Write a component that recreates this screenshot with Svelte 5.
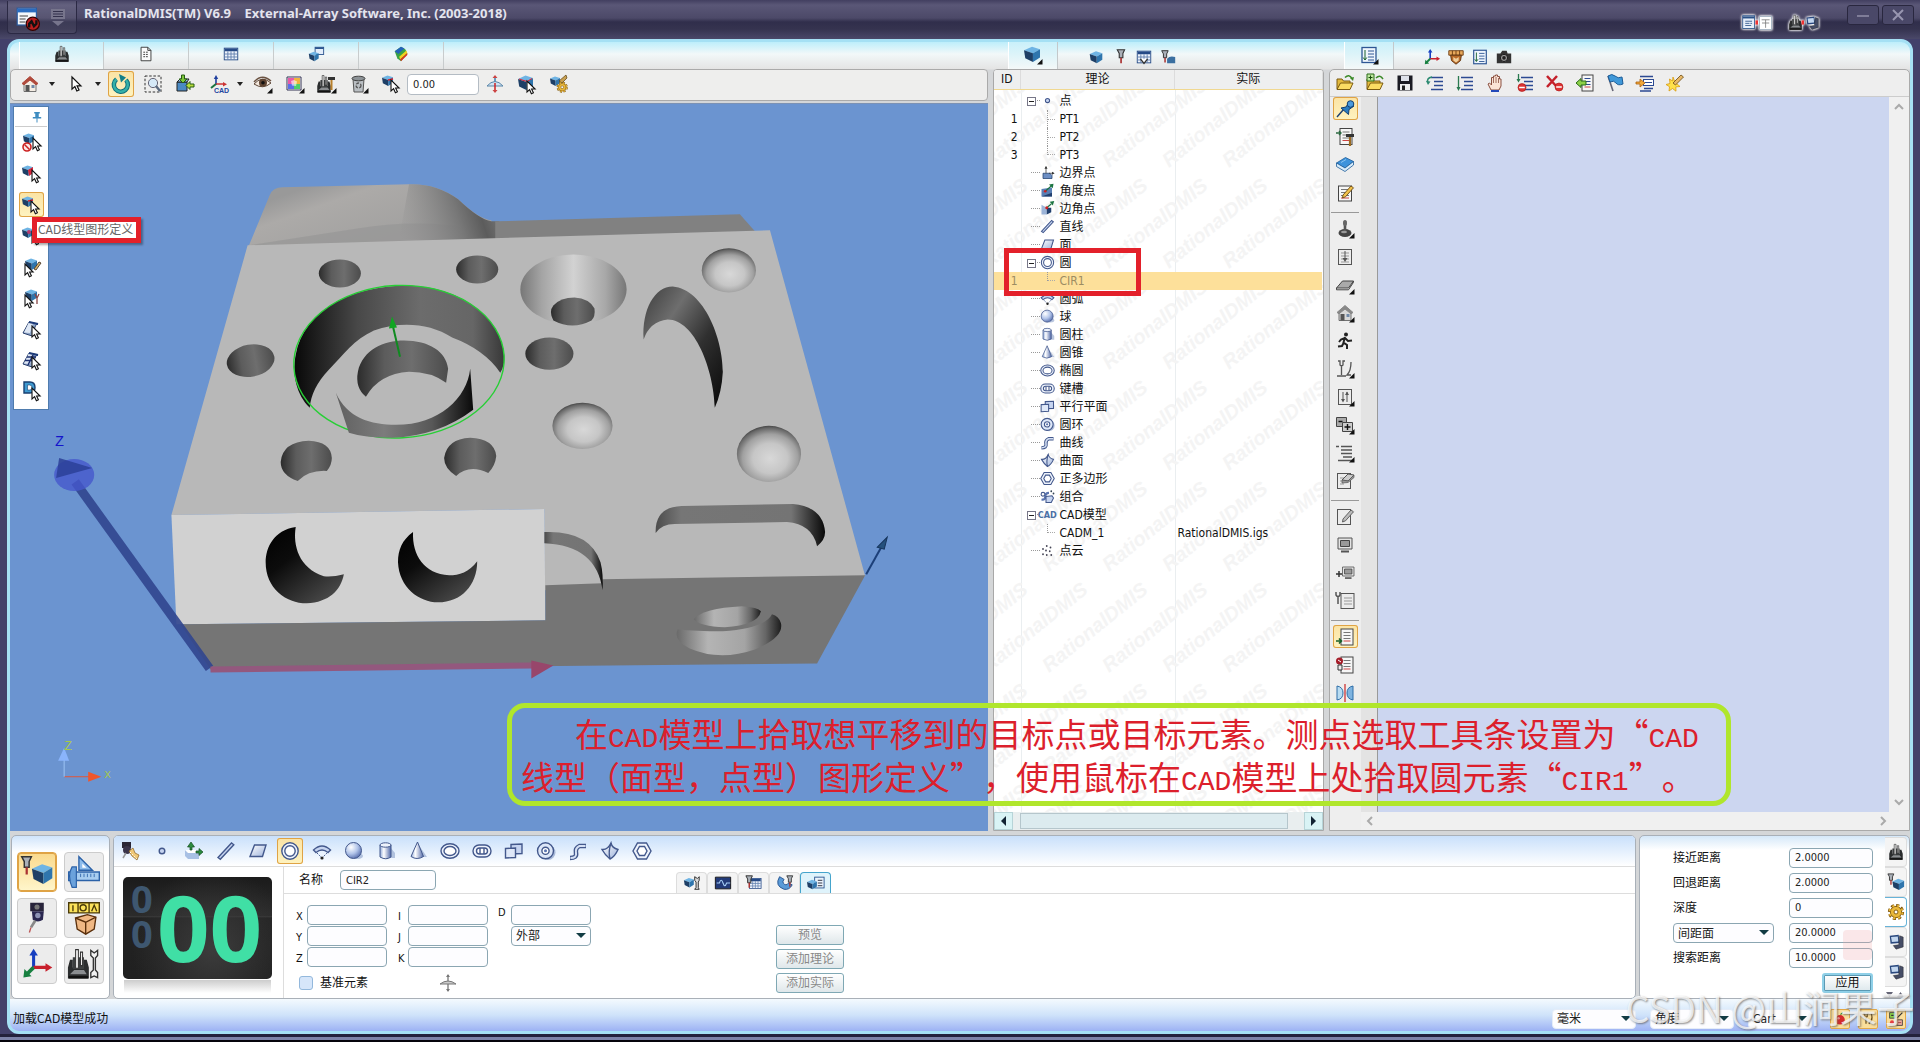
<script>
  const cube = (x, y, s) =>
    `<g transform="translate(${x} ${y}) scale(${s / 10})"><path d="M0 2.6 5 .4l5 1.6-4.4 2.6z" fill="#6fb4e4"/><path d="M0 2.6 5.6 4.6V10L.8 7.6z" fill="#1e3f66"/><path d="M5.6 4.6 10 2v5.2L5.6 10z" fill="#2f75ad"/></g>`;
  const cursor = (x, y, s = 1) =>
    `<path transform="translate(${x} ${y}) scale(${s})" d="M0 0v11l2.6-2.3 1.8 4 2-.9-1.8-3.8h3.5z" fill="#fff" stroke="#111" stroke-width="1.1"/>`;
  const corner = '<path d="M19.5 14v5.5H14z" fill="#111"/>';
  const probe = (x, y, s = 1) =>
    `<g transform="translate(${x} ${y}) scale(${s})"><path d="M0 0h6L4.6 3v3.5h-3V3z" fill="#aab0b8" stroke="#333" stroke-width=".9"/><path d="M3.1 6.5V11" stroke="#a33" stroke-width="1.4"/></g>`;
  const machine =
    '<path d="M2.500 12 4 7.500h2V12h8V7.500h2l1.500 4.500v6.500h-15z" fill="#2b2d2e"/><path d="M6 6h8v7H6z" fill="#3c3f40"/><path d="M8 1.500h2v11H8zM11.500 3h1.500v8h-1.500z" fill="#eee" stroke="#333" stroke-width=".7"/><path d="m4 16 3-2.500h7l2 2.500z" fill="#8a8d90"/><path d="M3 17h14v1.500H3z" fill="#111"/>';
  const page = (x = 4, y = 2, w = 12, h = 15, c = '#777') =>
    `<rect x="${x}" y="${y}" width="${w}" height="${h}" fill="#f6f6f6" stroke="#444"/><path d="M${x + 2.5} ${y + 3.5}h${w - 5}m-${w - 5} 3h${w - 5}m-${w - 5} 3h${w - 5}" stroke="${c}" fill="none"/><path d="M${x + 2.5} ${y + 12}h${w - 5}" stroke="#c44"/>`;
  const greyPage = (x = 3.5, y = 2.5) =>
    `<rect x="${x}" y="${y}" width="13" height="15" fill="#ececec" stroke="#555"/>`;
  const folder =
    '<path d="M2 16V6h5l1.5 2H15v2" fill="#e3b93c" stroke="#7a5a10"/><path d="M2 16.500 5.500 10H18l-3 6.500z" fill="#fbdc63" stroke="#7a5a10"/>';
  const lines = '<path d="M6 4.500h12M9 8.500h9M9 12.500h9M6 16.500h12" stroke="#2c4a92" stroke-width="1.700"/>';
  const noEntry = (x, y, r) =>
    `<circle cx="${x}" cy="${y}" r="${r}" fill="#d33" stroke="#a11" stroke-width=".6"/><path d="M${x - r + 1.2} ${y}h${2 * r - 2.4}" stroke="#fff" stroke-width="1.6"/>`;
  const house = (roof, wall) =>
    `<path d="M4 9v8.500h12V9l-6-5z" fill="${wall}" stroke="#555" stroke-width=".8"/><path d="M2 9.500 10 2.500l8 7-2 1.300-6-4.800-6 4.800z" fill="${roof}" stroke="${roof}"/><path d="M5.500 11h4v6.500h-4z" fill="#555"/><path d="M11.500 11h3v3h-3z" fill="#7089a8"/>`;
  const table =
    '<rect x="2.500" y="3.500" width="15" height="13" fill="#eef3fb" stroke="#264a86"/><path d="M3 5.500h14" stroke="#264a86" stroke-width="3"/><path d="M3 10h14M3 13.300h14M6.500 7v9M10 7v9M13.500 7v9" stroke="#5f7ead"/>';
  const list =
    '<rect x="3" y="2.500" width="14" height="15" fill="#eef5fd" stroke="#2d5694" stroke-width="1.300"/><path d="M9 6h6M9 9h6M9 12h6M9 15h6" stroke="#2d5694"/><path d="M6 5v9.500M4.200 12.500 6 15l1.800-2.500" stroke="#17602a" fill="none"/>';
  const monitor = (x, y, s = 1) =>
    `<g transform="translate(${x} ${y}) scale(${s})"><path d="M0 0h14v11H0z" fill="#e4e4e4" stroke="#555"/><path d="M2.500 2.500h9v6h-9z" fill="#999" stroke="#444"/><path d="M3 13.500h8" stroke="#555" stroke-width="2"/></g>`;
  const pc =
    '<path d="M3 3 13 2l1 9-10 1z" fill="#29487e"/><path d="M4.500 4.500 12 3.800l.6 5.600-7.200.7z" fill="#c3d7ef"/><path d="M14 3l4 1.500v11L10 18l-3-4 6-1z" fill="#454d66" stroke="#222" stroke-width=".5"/>';
  const surf =
    '<path d="M2 14 8 3l9 2c-5 1-2 8-6 12z" fill="#8fa6c8" stroke="#2a3f6c"/><path d="m8 3 4 1-3 10-6-.5z" fill="#dfe8f5"/><path d="m8 3 9 2" stroke="#1f3c7a" stroke-width="2.200"/>';
  const gear = (c = '#e9b83a') =>
    `<g transform="translate(10 10)"><circle r="7.500" fill="none" stroke="#7b5208" stroke-width="3" stroke-dasharray="3.400 2.490"/><circle r="6.300" fill="${c}" stroke="#7b5208"/><circle r="7.200" fill="none" stroke="${c}" stroke-width="2" stroke-dasharray="2.400 3.255" stroke-dashoffset="-.5"/><circle r="2.200" fill="#fff" stroke="#7b5208"/></g>`;
  const axes =
    '<path d="M8 12V3" stroke="#173fc0" stroke-width="1.800"/><path d="M5.500 5 8 1l2.500 4z" fill="#173fc0"/><path d="M8 12h8" stroke="#c8202c" stroke-width="1.800"/><path d="m15 9.500 4 2.500-4 2.500z" fill="#c8202c"/><path d="m8 12-4 4" stroke="#178040" stroke-width="2.200"/><path d="m2 18 .6-5 4.200 4.200z" fill="#178040"/>';
  const pencil = '<path d="m8 12 8-9 2.500 1.800-8 9L7.500 15z" fill="#f1c14b" stroke="#6a4a12" stroke-width=".9"/>';
  const greyPencil = '<path d="m8 12 8-9 2.500 1.800-8 9L7.500 15z" fill="#bbb" stroke="#555" stroke-width=".9"/>';
  const S = 'stroke="#43588c" stroke-width="1.400"';
  const L = '#c6d4f0';

  const icons = {
    machine,
    doc: '<path d="M4.500 2.500H12l3.500 3.500v11.500h-11z" fill="#fafafa" stroke="#333"/><path d="M12 2.500V6h3.500" fill="none" stroke="#333"/><path d="M7 8h6M7 10.500h6M7 13h6" stroke="#333" stroke-dasharray="2 1"/>',
    table,
    cubeDoc: '<rect x="9" y="2.500" width="9.500" height="8" fill="#e2edfa" stroke="#2a548e"/><path d="M9 3.500h9.500" stroke="#2a548e" stroke-width="2"/>' + cube(2, 7, 11),
    rainbow: '<path d="M3 7 10 2l5 3 2 5-7 8-4-3z" fill="#38a344"/><path d="M3 7 10 2l4 2-7 6z" fill="#2464b8"/><path d="m8 13 8-7 1 3-8 7z" fill="#f2d21f"/><path d="m9 16 8-7v2l-7 7z" fill="#dd3420"/>',
    home: house('#b04a3c', '#f4ede4'),
    arrow: cursor(6, 3, 1.1),
    refresh: '<path d="M5.500 5.200A7 7 0 1 0 15 6" fill="none" stroke="#0e6e7c" stroke-width="4.500"/><path d="M5.500 5.200A7 7 0 1 0 15 6" fill="none" stroke="#35b0a8" stroke-width="2.500"/><path d="m8 0 7 3.500-5 5z" fill="#148089"/>',
    zoomSel: '<rect x="2" y="2" width="16" height="16" fill="none" stroke="#333" stroke-dasharray="2.500 1.700"/><circle cx="10" cy="9" r="4.600" fill="#d5e9f8" stroke="#667"/><path d="m13 12 4 5" stroke="#5a6a80" stroke-width="2.400"/>',
    cubeArrows: '<path d="M2 8h10v9H2z" fill="#4a8ac4" stroke="#222"/><path d="m2 8 3-3h9l-2 3z" fill="#8fc0e8" stroke="#222"/><path d="M6.500 1h3v4h2.500L8 9 4 5h2.500z" fill="#7fc83c" stroke="#245c12"/><path d="M19 10v3h-4v2.500L11 11.500 15 7.500V10z" fill="#b8dc3a" stroke="#245c12"/>',
    cadAxes: '<path d="M8 11V3" stroke="#1f3f9e" stroke-width="1.600"/><path d="M5.800 5 8 1l2.200 4z" fill="#1f3f9e"/><path d="M8 10h8" stroke="#c33" stroke-width="1.500"/><path d="m15 8 4 2.200-4 2.200z" fill="#c33"/><path d="m8 10-5 4" stroke="#1b7440" stroke-width="2"/><text x="6" y="19" font-size="7" font-weight="700" font-family="Liberation Sans" fill="#2344a0">CAD</text>',
    eye: '<path d="M1 10Q9 1 18 9q-8 7-17 1z" fill="#f4e9df" stroke="#5b4536"/><path d="M1 8Q9-1 18 7" fill="none" stroke="#6b5342" stroke-width="1.500"/><circle cx="10" cy="8.800" r="4" fill="#5e4331"/><circle cx="10" cy="8.800" r="1.800" fill="#111"/>' + corner,
    color: '<path d="M2 3h14v13H2z" fill="#fff" stroke="#335"/><path d="M3 4h6v6H3z" fill="#e85aa8"/><path d="M9 4h6v6H9z" fill="#f2b33c"/><path d="M3 10h6v5H3z" fill="#5a6fe8"/><path d="M9 10h6v5H9z" fill="#4fcf6a"/><path d="m6 7 3-1 3 1.500L11 12l-4-.5z" fill="#fff" opacity=".6"/>' + corner,
    machineHammer: '<g transform="translate(-2 0) scale(.9 1)">' + machine + '</g><path d="M11 3h7v3h-7z" fill="#333"/><path d="M14.500 6v10" stroke="#b8802c" stroke-width="2"/>' + corner,
    trash: '<path d="M4 5h11l-1 13H5z" fill="#b9bec2" stroke="#555"/><ellipse cx="9.500" cy="4.500" rx="6.500" ry="2.300" fill="#8c9296" stroke="#444"/><circle cx="9.500" cy="11.500" r="2.500" fill="none" stroke="#555" stroke-width="1.300" stroke-dasharray="3 1.500"/>' + corner,
    cubeCursor: cube(1, 1, 11) + '<path d="m7 6 5-1" stroke="#d23" stroke-width="1.500"/>' + cursor(10, 6),
    bigCubeCursor: cube(1, 1, 15) + '<path d="m2 5 8 2.500 5-3" stroke="#d23" fill="none"/>' + cursor(10, 7),
    probeAxis: '<path d="M10 2v7" stroke="#3b7fb0" stroke-width="1.500"/><path d="M2 12q8-9 16 0z" fill="#cfe2f2" stroke="#5a86a8"/><path d="M10 9v9" stroke="#c22" stroke-width="1.500"/><path d="M7.500 4 10 1l2.500 3zM7.500 16 10 19l2.500-3z" fill="#c44"/>',
    probeGrey: '<path d="M10 2v16" stroke="#777" stroke-width="1.300"/><path d="M8 4 10 1l2 3zM8 16l2 3 2-3z" fill="#777"/><path d="M2 11q8-6 16 0z" fill="#ccc" stroke="#777"/>',
    cubeGear: cube(1, 2, 10) + '<path d="m10 7 7-6 1 3-5 5z" fill="#c8a050" stroke="#5a4010" stroke-width=".7"/><g transform="translate(7 7) scale(.62)">' + gear() + '</g>',
    pin: '<path d="M6 3h8v2h-1.500v5H16v2H4v-2h3.500V5H6zM9.300 12h1.400v6H9.300z" fill="#3e8cc0"/>',
    palNo: cube(2, 0, 11) + '<circle cx="6" cy="14" r="4" fill="#fbe8e8" stroke="#c22" stroke-width="1.600"/><path d="m3.500 11.500 5 5" stroke="#c22" stroke-width="1.500"/>' + cursor(12, 5),
    palFace: cube(1, 1, 11) + '<path d="m7 6 5-3v6l-4 3z" fill="#d8263a"/>' + cursor(11, 6),
    palPoint: cube(1, 1, 11) + '<circle cx="8" cy="6" r="2" fill="#b33a70"/>' + cursor(11, 6),
    palPencil: cube(4, 1, 12) + '<path d="m13 12 5-7 2 1-5 7z" fill="#d9b46a" stroke="#543"/>' + cursor(4, 7),
    palProbe: cube(4, 1, 12) + '<path d="m14 6 2 4 2-4m-2 4v6" stroke="#844" fill="none" stroke-width="1.300"/>' + cursor(4, 7),
    palSurf: surf + cursor(11, 7),
    palMesh: surf + '<path d="M4 10.500h9M6 7h9M7 15 12 5" stroke="#1c2f70" stroke-width="1.500"/>' + cursor(11, 7),
    palD: '<path d="M3 1h6q5 0 5 5.500t-5 5.500H3z" fill="#3f9ad0" stroke="#173f70" stroke-width="1.400"/><path d="M6.500 4h2q2.500 0 2.500 2.500T8.500 9h-2z" fill="#fff" stroke="#173f70" stroke-width=".6"/>' + cursor(11, 7),
    cube: cube(3, 3, 14),
    cubeTab: cube(1, 1, 16) + corner,
    probe: probe(7, 2, 1.35),
    tableProbe: table + '<path d="m6 12 4 5 4-5" stroke="#333" stroke-width="1.500" fill="#fff"/>',
    probeCube: probe(3, 3, 1.2) + '<path d="M9 12q3-4 9-2v7H9z" fill="#3b6fa0"/>',
    sideCube: probe(1, 1, 1.1) + cube(6, 6, 13),
    listTab: list + corner,
    list,
    axes,
    bracket: '<path d="M2 3h16v5H2z" fill="#e8a95c" stroke="#6b3b10"/><path d="M6 3v5m4-5v5m4-5v5" stroke="#6b3b10"/><path d="m4 8 12 0-1 6-5 4-5-4z" fill="#b86a28" stroke="#5b300c"/><path d="m7 10 3 2 3-2v4l-3 2-3-2z" fill="#f1cf9c"/>',
    camera: '<path d="M2 6h4l2-3h5l1 3h4v11H2z" fill="#333"/><circle cx="10" cy="11" r="4" fill="#999" stroke="#111"/><circle cx="10" cy="11" r="2" fill="#222"/>',
    open: folder + '<path d="M10 4.500q4-4 7 1" stroke="#3c8a28" stroke-width="1.500" fill="none"/><path d="m15 5 4-1-1 4z" fill="#3c8a28"/>',
    openPlus: folder + '<path d="M2 1h7v7H2z" fill="#bfe8a0" stroke="#2a6a18"/><path d="M5.500 2.500v4m-2-2h4" stroke="#184a0c"/><path d="M11 5q4-4 7 1" stroke="#3c8a28" stroke-width="1.500" fill="none"/>',
    save: '<path d="M2.500 2.500h15v15h-15z" fill="#1b1b22"/><path d="M6 3h8v5H6z" fill="#dfe2ea"/><path d="M5 11h10v6H5z" fill="#eee"/><path d="M7 12.500h3V17H7z" fill="#222"/>',
    stepInto: lines + '<path d="M7 4q-6 1-4 6" stroke="#2b8a70" fill="none" stroke-width="1.500"/><path d="m1 8 2 4 2.500-3.500z" fill="#2b8a70"/>',
    stepDown: lines + '<path d="M3.500 3v13" stroke="#2b7a50" stroke-width="1.300"/><path d="m1.500 14 2 4 2-4z" fill="#2b7a50"/>',
    hand: '<path d="M6 17 3 11l1.500-1 2 2V4.500h2V3h2V2h2v1.500h2V6h1.500v7l-2 4z" fill="#fbe3d6" stroke="#8a5040"/><path d="M8.500 4v6m2.500-6v6m2.500-5v5" stroke="#8a5040" stroke-width=".8"/><path d="M6 17h8v2H6z" fill="#2348b8"/>',
    stopList: lines + '<path d="M3.500 1v7" stroke="#2b7a50" stroke-width="1.300"/><path d="m1.500 6 2 3.500 2-3.500z" fill="#2b7a50"/>' + noEntry(7, 14.5, 4),
    xStop: '<path d="m2 3 10 11M12 3 2 14" stroke="#c4202a" stroke-width="2.500"/>' + noEntry(14, 14, 4),
    pageArrow: page(7, 2, 11, 16, '#2c4a92') + '<path d="M1 10l5-4.500V8h5v4H6v2.500z" fill="#8cd048" stroke="#2a6a18"/>',
    flag: '<path d="m3 3 5 15" stroke="#667" stroke-width="1.600"/><path d="M3 3q4-3 7 0t7 1l1 7q-5 2-7-1t-6-1z" fill="#3f98d8" stroke="#1c5c98"/>',
    goList: '<path d="M5 3.500h13M9 15.500h9M5 18h11" stroke="#2c4a92" stroke-width="1.600"/><rect x="8.500" y="6.500" width="10" height="6" fill="#fff" stroke="#2c4a92"/><path d="M10 9.500h7" stroke="#2c4a92"/><path d="M1 9h4V6l5 4-5 4v-3H1z" fill="#f3a93a" stroke="#a8600c" stroke-width=".8"/>',
    spark: '<path d="m8 4 1.500 4 4-1-2 3.500 3.500 3-4.200.4.200 4.300-3.500-2.700L4 18l.5-4.300L1 11.500l4-1L4.500 6l3 2z" fill="#ffe14a" stroke="#d89c12" stroke-width=".8"/><path d="m8 10 8-8 2.500 2-8 8z" fill="#e7b868" stroke="#6a4a12" stroke-width=".8"/>',
    pushpin: '<path d="m2 18 6.500-7.500" stroke="#1c3f70" stroke-width="1.400"/><path d="m6 9 5-1 3-5 5 4-5 3.500-.5 5z" fill="#2a7cc0" stroke="#123f70"/><circle cx="15.500" cy="5" r="3.300" fill="#4a9ade" stroke="#123f70"/>',
    pageHammer: page(5, 1.5, 12, 16) + '<path d="M1 6h5m-2-2 2 2-2 2" stroke="#2b6a40" fill="none" stroke-width="1.400"/><path d="M11 7h8v3h-8z" fill="#333"/><path d="M15 10v9" stroke="#9a6a20" stroke-width="2.200"/>',
    book: '<path d="m1.500 8 9-5.500 8 4-8.500 6.500z" fill="#3d93dc" stroke="#1c5c98" stroke-width=".8"/><path d="M1.500 8v3.500l8.500 5 8.500-6.500V6.500L10 13z" fill="#d9ecfa" stroke="#1c5c98" stroke-width=".8"/><path d="m6 7.500 5-3" stroke="#8cc4f0"/>',
    pagePencil: page(3.5, 3, 13, 15) + pencil,
    joystick: '<ellipse cx="10" cy="14" rx="6.500" ry="4" fill="#444"/><path d="M10 2v11" stroke="#555" stroke-width="2.600"/><ellipse cx="10" cy="4" rx="2" ry="3" fill="#666"/><ellipse cx="9" cy="13" rx="3" ry="1.300" fill="#999"/>' + corner,
    pageDown: greyPage() + '<path d="M6 6h8M6 9h8M6 12h8M6 15h8" stroke="#999"/><path d="M10 4v9" stroke="#555"/><path d="m7.500 11 2.500 4 2.500-4z" fill="#555"/>',
    plane: '<path d="m1.500 13 6-7h11l-5 7z" fill="#aaa" stroke="#444"/><path d="M1.500 13v1.800h12l5-7.500V6" fill="none" stroke="#444"/>' + corner,
    homeGrey: house('#888', '#d8d8d8') + corner,
    runner: '<circle cx="11" cy="3.500" r="2" fill="#222"/><path d="M10 6 8.500 11.500 12 14v4M9 11l-2 4-4 .5M10 7 6 8.500 4 11M10 7l3 3 4-.5" stroke="#222" stroke-width="2" fill="none"/>',
    probes: '<path d="M3 2h2v4q1.500 1.500 3 0V2h2M6.500 7v9M2 17h9M16 3q0 9-4 13h4" stroke="#555" fill="none" stroke-width="1.300"/>' + corner,
    pageUpDown: greyPage() + '<path d="M8 5v9M12 5v10" stroke="#555"/><path d="m6 12 2 3.500 2-3.500zM10 8l2-3.500L14 8z" fill="#555"/>' + corner,
    plusMinus: '<path d="M1.500 2.500h10v9h-10z" fill="#aaa" stroke="#444"/><path d="M3.500 6.500h4" stroke="#111" stroke-width="1.500"/><path d="M7.500 7.500h10v9h-10z" fill="#ccc" stroke="#444"/><path d="M9.500 12h6m-3-3v6" stroke="#111" stroke-width="1.400"/>' + corner,
    textLines: '<path d="M1 3.500h3M6 3.500h11M6 7h11M6 10.500h11M8 14h9M3 17.500h14" stroke="#555" stroke-width="1.300"/>' + corner,
    eraser: greyPage(2.5) + '<path d="M5 7h6M5 10h5M5 13h4" stroke="#999"/><path d="m7 9 6-6 6 1-6 6z" fill="#ccc" stroke="#555"/><path d="M7 9v3l6-.500 6-5V4l-6 6z" fill="#999" stroke="#555" stroke-width=".7"/>',
    editGrey: greyPage(2.5) + greyPencil,
    monitor: monitor(3, 3),
    plusMonitor: '<path d="M1 11h6M4 8v6" stroke="#333" stroke-width="1.500"/>' + monitor(7.5, 4, 0.82),
    probePage: greyPage(6) + '<path d="M9 7h8M9 10h8M9 13h8" stroke="#999"/><path d="M1 1v3q2 3 4 0V1M3 6v7" fill="none" stroke="#555" stroke-width="1.500"/>',
    pageGo: page(6, 2, 12, 16) + '<path d="M1 14h5m-2-2.500L6.500 14 4 16.500" stroke="#17602a" fill="none" stroke-width="1.600"/>',
    pageStop: page(6, 2, 12, 16) + '<circle cx="4.500" cy="6" r="3.500" fill="#a51c28"/><path d="M3 10h4v5H3z" fill="#eee" stroke="#333"/><path d="m3 5 3 2" stroke="#fff"/>',
    mirror: '<path d="M2 3q6 1 6 7t-6 7z" fill="#b9dcf2" stroke="#2e6ea8"/><path d="M18 3q-6 1-6 7t6 7z" fill="#7fb4e0" stroke="#2e6ea8"/><path d="M10 1v18" stroke="#c33" stroke-width="1.300"/>',
    manual: '<path d="M2 1h9v6H2z" fill="#2a2636"/><circle cx="7" cy="9" r="4" fill="#3a344a"/><path d="m6 12-3 5" stroke="#999" stroke-width="1.500"/><path d="m9 10 4-3 2 5 4 2-2 5-5-4z" fill="#f0c878" stroke="#8a6020" stroke-width=".7"/><path d="m10 11 7 7" stroke="#fff" stroke-dasharray="1.500 1.500"/>',
    point: `<circle cx="10" cy="10" r="2.800" fill="${L}" ${S}/>`,
    edge: '<path d="M1 9h11l3 3v6H4l-3-3z" fill="#a8c0e4"/><path d="m1 9 11 0 3 3H4z" fill="#fff"/><path d="M7 1 3.500 6H6v3h2V6h2.500zM19 11l-4-3.500V10h-3v2h3v2.500z" fill="#2b8a3e" stroke="#174f22" stroke-width=".7"/>',
    line: `<path d="M2 16.500 15.500 2l2.300 1.800L4.300 18.200z" fill="${L}" ${S}/>`,
    face: `<path d="M2 15.500 6.500 4H18l-3.500 11.500z" fill="url(#gPlane)" ${S}/>`,
    circle: `<circle cx="10" cy="10" r="8.200" fill="#eef3fc" ${S}/><circle cx="10" cy="10" r="5.200" fill="#fff" ${S}/>`,
    arc: `<path d="M1.500 9q8.500-8 17 0l-2.500 2.500q-6-5-12 0z" fill="${L}" ${S}/><path d="m5 12 5 5 5-5" fill="none" stroke="#43588c" stroke-dasharray="1.500 1"/><circle cx="10" cy="17" r="1.600" fill="#222"/>`,
    sphere: '<ellipse cx="14" cy="15" rx="5" ry="3" fill="#8ba0c8" opacity=".6"/><circle cx="9.500" cy="9.500" r="8" fill="url(#gSph)" stroke="#43588c"/>',
    cylinder: '<path d="m14 6 5 6v5h-6z" fill="#8ba0c8" opacity=".6"/><path d="M4 4v12q6 3.500 11 0V4z" fill="url(#gCyl)" stroke="#43588c"/><ellipse cx="9.500" cy="4" rx="5.500" ry="2.200" fill="#eef3fc" stroke="#43588c"/>',
    cone: '<path d="m10 3 9 13h-6z" fill="#8ba0c8" opacity=".6"/><path d="M9.500 1 3 15.500q6 4 12.500 0z" fill="url(#gCyl)" stroke="#43588c"/>',
    ellipse: `<ellipse cx="10" cy="10" rx="9" ry="7.300" fill="#eef3fc" ${S}/><ellipse cx="10" cy="10" rx="6" ry="4.500" fill="#fff" ${S}/>`,
    slot: `<rect x="1" y="4" width="18" height="12" rx="6" fill="#eef3fc" ${S}/><rect x="4.500" y="7" width="11" height="6" rx="3" fill="#fff" ${S}/><path d="M8 7v6m4-6v6" ${S}/>`,
    planes: `<path d="M7 3.500 18 3v9.500L7 13z" fill="${L}" ${S}/><path d="m1.500 7.500 10-.5v9.500L1.500 17z" fill="#dfe8f8" ${S}/>`,
    torus: `<ellipse cx="12" cy="11.500" rx="7.500" ry="7.500" fill="#8ba0c8" opacity=".7"/><circle cx="9.500" cy="9.800" r="8" fill="#dde7f8" ${S}/><circle cx="9.500" cy="9.800" r="3.600" fill="#fff" ${S}/><circle cx="9.500" cy="9.800" r="1.500" fill="#5a74b0"/>`,
    curve: `<path d="M2 17q7 0 6-5t3.500-7H18" fill="none" stroke="#43588c" stroke-width="4.600"/><path d="M2.500 17q6.500 0 5.500-5t3.500-7h6" fill="none" stroke="#d5e0f4" stroke-width="2"/>`,
    surface: `<path d="M2 8.500Q8 9 11 2q1 5 7 6.500-3 7-8 9.500Q5 14 2 8.500z" fill="url(#gPlane)" ${S}/><path d="M10 18Q8 11 11 2" fill="none" ${S}/>`,
    polygon: `<path d="M5.500 2h9l4.500 8-4.500 8h-9L1 10z" fill="#eef3fc" ${S}/><path d="M7.500 5.500h5l2.500 4.500-2.500 4.500h-5L5 10z" fill="#fff" ${S}/>`,
    group: `<path d="M2 14q5 1 5-4t5-5" fill="none" stroke="#5a74b0" stroke-width="3"/><path d="m8 10 8-1 2 3-3 6H8z" fill="${L}" ${S}/><circle cx="15" cy="3" r="1.200" fill="#345"/><circle cx="18" cy="6" r="1.200" fill="#345"/><circle cx="4" cy="7" r="2.500" fill="#fff" ${S}/>`,
    cad: '<text x="-3" y="15" font-size="12" font-weight="700" font-family="DejaVu Sans Condensed" fill="#4a6fa5">CAD</text>',
    cloud: '<g fill="#445"><circle cx="4" cy="8" r="1.200"/><circle cx="9" cy="4" r="1.200"/><circle cx="14" cy="6" r="1.200"/><circle cx="8" cy="10" r="1.200"/><circle cx="13" cy="11" r="1.200"/><circle cx="4" cy="15" r="1.200"/><circle cx="9" cy="16" r="1.200"/><circle cx="15" cy="16" r="1.200"/></g>',
    angPoint: '<path d="M2 8 16 6v12H2z" fill="#5a7fb4"/><path d="m2 18 14-5v5z" fill="#22406e"/><path d="m7 11 8-7" stroke="#1b7440" stroke-width="1.500"/><path d="m12 2 6-1-1 6z" fill="#1b7440"/><circle cx="7" cy="11" r="1.800" fill="#c22"/>',
    cornerPoint: '<path d="m2 5 7 4v9H2z" fill="#9cb4d8"/><path d="M9 9h6v6l-6 3z" fill="#22406e"/><path d="m9 9 6-5" stroke="#1b7440" stroke-width="1.500"/><path d="m13 1 6-1-2 6z" fill="#1b7440"/><circle cx="9" cy="9" r="2" fill="#c22"/>',
    edgePoint: '<path d="M4 11h9l3 3v4H4z" fill="#6d8fc4" stroke="#22406e"/><path d="M8 11V3m4 8h6" stroke="#333"/><path d="m6 5 2-4 2 4zM16 9l3.500 2-3.500 2z" fill="#333"/>',
    tabProbe: cube(1, 4, 11) + '<path d="M13 3v4l1.500 2v6L13 17h5l-1-2V9l1-2V3l-2 2z" fill="#ddd" stroke="#222"/>',
    wave: '<path d="M1.500 3.500h17v13h-17z" fill="#223a78" stroke="#111"/><path d="M3 10h3q2-6 4 0t4 0h4" stroke="#a8d0f8" fill="none" stroke-width="1.200"/>',
    tableProbe2: '<g transform="translate(3 2) scale(.85)">' + table + '</g>' + probe(1, 2, 1.2),
    ringProbe: '<path d="M4 3q-6 10 5 14 6 1 9-5l-4-2q-3 4-6 0-1-2 1-4z" fill="#5b9bd8" stroke="#22508c"/>' + probe(12, 2, 1.1),
    cubeList: '<rect x="8.500" y="3.500" width="10.500" height="12" fill="#eaf3fc" stroke="#2a548e"/><path d="M12 7h5M12 10h5M12 13h5" stroke="#223"/>' + cube(0, 6, 11),
    gear: gear(),
    pc,
    bigProbeCube: probe(1, 1, 0.95) + cube(7, 5, 12),
    caliper: '<path d="M1 10h18v5H1z" fill="#a8cdf0" stroke="#2c62a8" stroke-width=".8"/><path d="M3 7q-3 5 0 12h2.500V7z" fill="#6ba2dc" stroke="#2c62a8" stroke-width=".7"/><path d="m7 9 0-8 8 8z" fill="#8dbcec" stroke="#2c62a8" stroke-width=".8"/><path d="m9 7.500 0-2.500 2.500 2.500z" fill="#fff"/><path d="M8 13v-2m2 2v-2m2 2v-2m2 2v-2m2 2v-2" stroke="#2c62a8" stroke-width=".5"/>',
    head: '<path d="M6 1h8v5H6z" fill="#28243a"/><circle cx="10" cy="3.500" r="1.500" fill="#777"/><path d="M7 6h7l-.5 5q-3 2-6 0z" fill="#2a2750"/><circle cx="10.500" cy="8.500" r="1.600" fill="#8c92b4"/><path d="m9 11.500-2.500 4" stroke="#888" stroke-width="1.600"/><path d="m6.500 15.500-1 3" stroke="#b55" stroke-width=".8"/>',
    tol: '<path d="M1 1h18v6H1z" fill="#fbe25a" stroke="#4a3a08" stroke-width=".8"/><path d="M6.500 1v6M13 1v6M3.500 2.500V6" stroke="#4a3a08" stroke-width=".8"/><circle cx="9.500" cy="4" r="1.800" fill="none" stroke="#4a3a08" stroke-width=".8"/><path d="m14.500 6 1.500-3.500L17.500 6" fill="none" stroke="#4a3a08" stroke-width=".8"/><path d="m5 10 7-2 5 1.500-1 7-5 3-5-3z" fill="#f0b884" stroke="#5b300c" stroke-width=".8"/><path d="m5 10 6 2.500 6-3M11 12.500v7" fill="none" stroke="#5b300c" stroke-width=".8"/>',
    machineWrench: '<g transform="translate(-1.500 0) scale(.82 1)">' + machine + '</g><path d="M14 2v3l1.500 1.500v7L14 15v3l2-1 2 1v-3l-1.300-1.500v-7L18 5V2l-2 1.500z" fill="#f2f2f2" stroke="#333" stroke-width=".8"/>',
    apple: '<circle cx="10" cy="11" r="6" fill="#d42c2c"/><path d="M10 5q1-4 4-3-1 3-4 3z" fill="#3c8a28"/><circle cx="8" cy="9" r="1.600" fill="#f49a9a"/>',
    hooks: '<path d="M4 3h2v4q1.500 1 3 0V3h2M7.500 8v8M14 3q3 8-3 13" stroke="#664a18" fill="none" stroke-width="1.500"/>',
    calc: '<path d="M2 2h7v7H2z" fill="#8cd048" stroke="#333"/><path d="m11 9 7-7M4 5.500h3" stroke="#333" stroke-width="1.500"/><path d="M11 11h7v7h-7z" fill="#f0b0a0" stroke="#333"/><circle cx="5" cy="14" r="2.500" fill="#e84040"/><path d="M12.500 14.500h4" stroke="#933"/>',
    titleDocs: '<rect x="2" y="2" width="14" height="15" fill="#e6effa" stroke="#2b5288"/><path d="M2 4h14" stroke="#2b5288" stroke-width="2.500"/><path d="M5 8.500h8M5 11h5m1 0h2M5 13.500h7" stroke="#2b5288"/><path d="M18.500 7.500v5" stroke="#e33" stroke-width="3"/>',
    titlePage: '<rect x="2" y="2" width="15" height="16" fill="#fff" stroke="#9ab"/><path d="M4.500 6h10M9.500 6v10M5 10h9" stroke="#777"/>',
    titleMachine: machine + '<path d="M18.500 7.500v5" stroke="#e33" stroke-width="3"/>',
    logo: '<rect x="1" y="1" width="16" height="14" fill="#f4f7fb" stroke="#2a5ca0"/><path d="M1 3h16" stroke="#2a6cc0" stroke-width="3"/><path d="M3 7.500h7M3 10h5M3 12.500h5" stroke="#444"/><circle cx="14" cy="14" r="5.500" fill="#b81e1e" stroke="#300"/><path d="M11 17v-3l2-2 2 4 2-2v-3" stroke="#111" stroke-width="2" fill="none"/>',
    menu: '<path d="M3 2h14v10H3z" fill="#77758c"/><path d="M5 4.500h10M5 7h10M5 9.500h10" stroke="#33314c"/><path d="M4 14h12l-6 5z" fill="#77758c"/>'
  };

  const leftTabs = ['machine', 'doc', 'table', 'cubeDoc', 'rainbow'];
  const viewTools = [
    ['home', '视图', true], ['arrow', '选择', true], ['refresh', '旋转', false], ['zoomSel', '缩放', false],
    ['cubeArrows', '适合', false], ['cadAxes', 'CAD', true], ['eye', '显示', false], ['color', '颜色', false],
    ['machineHammer', '机器', false], ['trash', '删除', false], ['cubeCursor', '拾取', false]
  ];
  const viewTools2 = ['probeAxis', 'bigCubeCursor', 'cubeGear'];
  const palette = ['palNo', 'palFace', 'cubeCursor', 'palPoint', 'palPencil', 'palProbe', 'palSurf', 'palMesh', 'palD'];
  const midTabs = ['cube', 'probe', 'tableProbe', 'probeCube'];
  const rightTabs = ['axes', 'bracket', 'list', 'camera'];
  const progTools = ['open', 'openPlus', 'save', 'stepInto', 'stepDown', 'hand', 'stopList', 'xStop', 'pageArrow', 'flag', 'goList', 'spark'];
  const sideGroups = [
    ['pushpin', 'pageHammer', 'book', 'pagePencil'],
    ['joystick', 'pageDown', 'plane', 'homeGrey', 'runner', 'probes', 'pageUpDown', 'plusMinus', 'textLines', 'eraser'],
    ['editGrey', 'monitor', 'plusMonitor', 'probePage'],
    ['pageGo', 'pageStop', 'mirror']
  ];
  const rows = [
    { n: '点', icon: 'point', open: true },
    { n: 'PT1', id: 1, child: true }, { n: 'PT2', id: 2, child: true }, { n: 'PT3', id: 3, child: true, last: true },
    { n: '边界点', icon: 'edgePoint' }, { n: '角度点', icon: 'angPoint' }, { n: '边角点', icon: 'cornerPoint' },
    { n: '直线', icon: 'line' }, { n: '面', icon: 'face' }, { n: '圆', icon: 'circle', open: true },
    { n: 'CIR1', id: 1, child: true, last: true, sel: true },
    { n: '圆弧', icon: 'arc' }, { n: '球', icon: 'sphere' }, { n: '圆柱', icon: 'cylinder' }, { n: '圆锥', icon: 'cone' },
    { n: '椭圆', icon: 'ellipse' }, { n: '键槽', icon: 'slot' }, { n: '平行平面', icon: 'planes' }, { n: '圆环', icon: 'torus' },
    { n: '曲线', icon: 'curve' }, { n: '曲面', icon: 'surface' }, { n: '正多边形', icon: 'polygon' }, { n: '组合', icon: 'group' },
    { n: 'CAD模型', icon: 'cad', open: true }, { n: 'CADM_1', child: true, last: true, actual: 'RationalDMIS.igs' },
    { n: '点云', icon: 'cloud' }
  ];
  const features = ['manual', 'point', 'edge', 'line', 'face', 'circle', 'arc', 'sphere', 'cylinder', 'cone', 'ellipse', 'slot', 'planes', 'torus', 'curve', 'surface', 'polygon'];
  const modes = ['bigProbeCube', 'caliper', 'head', 'tol', 'axes', 'machineWrench'];
  const formTabs = ['tabProbe', 'wave', 'tableProbe2', 'ringProbe', 'cubeList'];
  const sideTabs = ['machine', 'sideCube', 'gear', 'pc', 'pc'];
  const axisFields = [['X', 'I'], ['Y', 'J'], ['Z', 'K']];
  const marks = [];
  for (let r = 0; r < 8; r++) for (let c = -1; c < 5; c++) marks.push([c * 60 - 5, r * 101 + 98]);

  let name = $state('CIR2');
  let datum = $state(false);
</script>

{#snippet icon(key, size = 20)}
  <svg class="icon" width={size} height={size} viewBox="0 0 20 20" aria-hidden="true">{@html icons[key]}</svg>
{/snippet}

<svg class="defs" width="0" height="0" aria-hidden="true">
  <defs>
    <radialGradient id="gSph" cx=".35" cy=".3" r=".8"><stop offset="0" stop-color="#fff" /><stop offset=".5" stop-color="#b4c6ea" /><stop offset="1" stop-color="#4a62a4" /></radialGradient>
    <linearGradient id="gCyl"><stop offset="0" stop-color="#8fa8d8" /><stop offset=".35" stop-color="#fff" /><stop offset="1" stop-color="#5068a8" /></linearGradient>
    <linearGradient id="gPlane" x2="1" y2="1"><stop offset="0" stop-color="#fff" /><stop offset="1" stop-color="#9fb4dc" /></linearGradient>
  </defs>
</svg>

<div class="app">
  <header class="title">
    <div class="logo">{@render icon('logo', 24)}{@render icon('menu', 20)}</div>
    <h1>RationalDMIS(TM) V6.9 &nbsp;&nbsp; External-Array Software, Inc. (2003-2018)</h1>
    <div class="tray">
      <span>{@render icon('titleDocs', 17)}{@render icon('titlePage', 16)}</span>
      <span>{@render icon('titleMachine', 17)}{@render icon('pc', 16)}</span>
    </div>
    <div class="winbtns">
      <button aria-label="最小化"><svg width="14" height="14" viewBox="0 0 14 14"><path d="M1 8h12" stroke="#7f7d98" stroke-width="2" /></svg></button>
      <button aria-label="关闭"><svg width="14" height="14" viewBox="0 0 14 14"><path d="m2 2 10 10M12 2 2 12" stroke="#9896b0" stroke-width="2" /></svg></button>
    </div>
  </header>

  <div class="frame">
    <main class="work">
      <section class="col">
        <nav class="tabs wide">
          {#each leftTabs as t, i}<button class:on={i === 0} aria-label={t}>{@render icon(t, 18)}</button>{/each}
        </nav>
        <div class="toolbar">
          {#each viewTools as [k, label, caret], i}
            <button class="tool" class:caret class:active={i === 2} aria-label={label}>{@render icon(k)}{#if caret}<i></i>{/if}</button>
          {/each}
          <input class="angle" aria-label="角度" value="0.00" />
          {#each viewTools2 as k}<button class="tool" aria-label={k}>{@render icon(k)}</button>{/each}
        </div>
        <div class="viewport">
          <svg class="scene" viewBox="12 104 975 727" preserveAspectRatio="xMinYMin slice" role="img" aria-label="CAD模型">
            <defs>
              <linearGradient id="hole"><stop offset="0" stop-color="#2c2c2c" /><stop offset=".3" stop-color="#5c5c5c" /><stop offset=".6" stop-color="#6e6e6e" /><stop offset="1" stop-color="#4c4c4c" /></linearGradient>
              <linearGradient id="big"><stop offset="0" stop-color="#080808" /><stop offset=".3" stop-color="#484848" /><stop offset=".6" stop-color="#6c6c6c" /><stop offset=".85" stop-color="#666" /><stop offset="1" stop-color="#383838" /></linearGradient>
              <linearGradient id="boss"><stop offset="0" stop-color="#606060" /><stop offset=".35" stop-color="#7c7c7c" /><stop offset=".7" stop-color="#585858" /><stop offset="1" stop-color="#0a0a0a" /></linearGradient>
              <radialGradient id="ball" cx=".52" cy=".58" r=".6"><stop offset="0" stop-color="#d8d8d8" /><stop offset=".45" stop-color="#c6c6c6" /><stop offset=".72" stop-color="#a0a0a0" /><stop offset=".9" stop-color="#686868" /><stop offset="1" stop-color="#383838" /></radialGradient>
              <linearGradient id="crater"><stop offset="0" stop-color="#777" /><stop offset=".2" stop-color="#a4a4a4" /><stop offset=".5" stop-color="#d2d2d2" /><stop offset=".8" stop-color="#a8a8a8" /><stop offset="1" stop-color="#777" /></linearGradient>
              <linearGradient id="moon" y2="1"><stop offset="0" stop-color="#3c3c3c" /><stop offset=".3" stop-color="#6e6e6e" /><stop offset=".6" stop-color="#303030" /><stop offset="1" stop-color="#080808" /></linearGradient>
              <linearGradient id="moon2" x2=".8" y2="1"><stop offset="0" stop-color="#000" /><stop offset=".4" stop-color="#0c0c0c" /><stop offset="1" stop-color="#4c4c4c" /></linearGradient>
              <linearGradient id="ring"><stop offset="0" stop-color="#6a6a6a" /><stop offset=".3" stop-color="#b4b4b4" /><stop offset=".65" stop-color="#a4a4a4" /><stop offset=".85" stop-color="#666" /><stop offset="1" stop-color="#1c1c1c" /></linearGradient>
              <linearGradient id="back" gradientUnits="userSpaceOnUse" x1="330" y1="180" x2="355" y2="250"><stop offset="0" stop-color="#999" /><stop offset=".3" stop-color="#acaaa8" /><stop offset="1" stop-color="#a2a1a0" /></linearGradient>
              <linearGradient id="fold" gradientUnits="userSpaceOnUse" x1="400" y1="235" x2="505" y2="200"><stop offset="0" stop-color="#8e8e8e" stop-opacity="0" /><stop offset=".55" stop-color="#787878" /><stop offset=".75" stop-color="#5c5c5c" /><stop offset="1" stop-color="#808080" /></linearGradient>
              <linearGradient id="slot"><stop offset="0" stop-color="#4c4c4c" /><stop offset=".15" stop-color="#767676" /><stop offset=".8" stop-color="#747474" /><stop offset="1" stop-color="#080808" /></linearGradient>
            </defs>
            <path d="M250 247 271 196Q274 188 284 188L410 185Q437 184 459 200 480 220 492 221L500 245z" fill="url(#back)" />
            <path d="M250 246 360 229Q420 219 480 230V243z" fill="#959595" opacity=".6" />
            <path d="M400 240 410 185Q437 184 459 200 480 220 492 222L500 222V243z" fill="url(#fold)" />
            <path d="M496 222 740 215 755 232 496 243z" fill="#818181" />
            <path d="M249 246 770 231 865 576 545 590 545 509 173 515z" fill="#b8b8b8" />
            <path d="M173 515 545 509 546 620 178 624z" fill="#d1d1d1" />
            <path d="M182 624 546 620V585l57-2v-4l262-4-48 88-605 6z" fill="#757575" />
            <path d="M545 532Q590 530 601 562q3 12 2 28Q597 545 545 543z" fill="url(#slot)" />
            <g fill="url(#hole)">
              <ellipse cx="341" cy="274" rx="21" ry="14" />
              <ellipse cx="478" cy="270" rx="21" ry="14" />
              <ellipse cx="252" cy="361" rx="24" ry="16" transform="rotate(-10 252 361)" />
              <ellipse cx="550" cy="354" rx="24" ry="16" />
              <path d="M299 481Q282 475 282 462 284 442 310 441 332 442 333 458 333 465 328 471 310 470 299 481z" />
              <path d="M457 476Q445 468 445 458 448 439 471 438 495 439 497 456 496 466 489 473 470 464 457 476z" />
            </g>
            <path d="M311 408C298 395 293 375 297 355 305 312 350 286 410 286 465 288 502 320 505 355Q506 365 501 373 485 350 453 338C430 323 400 322 375 331 355 340 345 355 330 370 318 383 312 395 311 408z" fill="url(#big)" />
            <ellipse cx="400" cy="362" rx="105" ry="76" transform="rotate(-3 400 362)" fill="none" stroke="#27cf35" stroke-width="1.400" />
            <path d="M367 397Q356 388 359 372C364 350 385 341 405 341 430 341 447 352 449 369L447 383Q432 372 410 372 380 374 367 397z" fill="url(#hole)" />
            <path d="M337 393C348 418 372 425 397 425 440 425 468 398 471 369L474 410Q440 436 393 438 365 438 350 433z" fill="url(#boss)" />
            <path d="m401 357-7-30" stroke="#108a20" stroke-width="2" /><path d="m390 329 3-12 5 11z" fill="#11a522" />
            <ellipse cx="574" cy="290" rx="53" ry="35" fill="url(#crater)" />
            <path d="M554 321Q549 312 554 306 561 298 575 298 590 299 595 309 596 317 592 321 573 331 554 321z" fill="url(#hole)" />
            <ellipse cx="729" cy="271" rx="27" ry="22" fill="url(#ball)" />
            <ellipse cx="583" cy="426" rx="30" ry="23" fill="url(#ball)" />
            <ellipse cx="769" cy="454" rx="32" ry="28" fill="url(#ball)" />
            <path d="M644 340C642 310 655 287 673 287 705 290 723 340 723 372Q722 392 715 408C714 370 695 320 668 320Q650 322 644 340z" fill="url(#moon)" />
            <path d="M656 533Q655 507 682 506L793 504Q823 507 825 532 825 540 817 546 812 524 787 522L675 524Q662 524 656 533z" fill="url(#slot)" />
            <path d="M678 629Q673 640 690 648 720 661 755 649 784 637 781 623 779 616 772 614 765 628 723 631 695 631 678 629z" fill="url(#ring)" />
            <path d="M694 619Q703 608 742 606 758 607 761 611 758 625 725 627 700 626 694 619z" fill="url(#ring)" />
            <path d="M297 527C275 530 267 548 267 562 267 588 287 603 308 603 330 602 342 590 345 574Q334 577 325 576C300 568 294 545 297 527z" fill="url(#moon2)" />
            <path d="M414 532C403 540 399 550 399 562 400 587 420 602 439 602 462 602 478 585 478 561 470 572 460 575 450 575 425 574 413 555 414 532z" fill="url(#moon2)" />
            <path d="M211 668 77 482" stroke="#31468f" stroke-width="9" opacity=".9" />
            <ellipse cx="76" cy="475" rx="20" ry="16" fill="#4658cc" opacity=".8" />
            <path d="m61 458 33 10-36 10z" fill="#2c3f98" opacity=".85" />
            <path d="M212 669 533 665" stroke="#93587e" stroke-width="6" /><path d="m532 660 22 5-22 13z" fill="#98466b" />
            <text x="57" y="446" font-family="Liberation Mono" font-size="15" fill="#1414cc">Z</text>
            <path d="m866 574 15-27" stroke="#1c3f78" stroke-width="2" /><path d="m887 537-10 10 7 2z" fill="#24507c" stroke="#16345c" />
            <path d="M66 776h26" stroke="#e0563a" /><path d="m90 771 13 5-13 5z" fill="#f0562c" />
            <path d="M66 776v-18" stroke="#9cc4f4" /><path d="m60 760 6-13 5 13z" fill="#8ab4fc" />
            <text x="66" y="749" font-family="Liberation Mono" font-size="13" fill="#a6c84a">Z</text>
            <text x="106" y="777" font-family="Liberation Mono" font-size="11" fill="#a6c84a">X</text>
          </svg>
          <div class="palette">
            <div class="pinrow">{@render icon('pin', 14)}</div>
            {#each palette as p, i}<button class:active={i === 2} aria-label={p}>{@render icon(p)}</button>{/each}
          </div>
          <div class="tip" role="tooltip">CAD线型图形定义</div>
        </div>
      </section>

      <section class="col">
        <nav class="tabs"><button class="on" aria-label="元素">{@render icon('cubeTab')}</button><span>{#each midTabs as t}<button aria-label={t}>{@render icon(t, 18)}</button>{/each}</span></nav>
        <div class="tree">
          <svg class="marks" aria-hidden="true">{#each marks as [x, y]}<text transform="translate({x} {y}) rotate(-39)">RationalDMIS</text>{/each}</svg>
          <table>
            <colgroup><col class="cid" /><col class="cth" /><col /></colgroup>
            <thead><tr><th>ID</th><th>理论</th><th>实际</th></tr></thead>
            <tbody>
              {#each rows as r}
                <tr class:sel={r.sel}>
                  <td class="id">{r.id ?? ''}</td>
                  <td>
                    <div class="node">
                      {#if r.child}
                        <span class="branch" class:last={r.last}></span>
                      {:else}
                        <span class="twig">{#if r.open}<button class="exp" aria-label="折叠"></button>{/if}</span>
                        {@render icon(r.icon, 15)}
                      {/if}
                      <span class="nm">{r.n}</span>
                    </div>
                  </td>
                  <td>{r.actual ?? ''}</td>
                </tr>
              {/each}
            </tbody>
          </table>
          <div class="hscroll"><button aria-label="向左"><i class="lt"></i></button><div class="thumb"></div><button aria-label="向右"><i class="rt"></i></button></div>
          <div class="redbox"></div>
        </div>
      </section>

      <section class="col">
        <nav class="tabs"><button class="on" aria-label="程序">{@render icon('listTab')}</button><span>{#each rightTabs as t}<button aria-label={t}>{@render icon(t, 18)}</button>{/each}</span></nav>
        <div class="program">
          <div class="progbar">{#each progTools as k}<button aria-label={k}>{@render icon(k)}</button>{/each}</div>
          <div class="progbody">
            <div class="side">
              {#each sideGroups as g, gi}
                {#if gi > 0}<hr />{/if}
                {#each g as k, i}<button class:active={i === 0 && (gi === 0 || gi === 3)} aria-label={k}>{@render icon(k)}</button>{/each}
              {/each}
            </div>
            <div class="gutter"></div>
            <div class="code"></div>
            <div class="vs"><svg width="10" height="8" viewBox="0 0 10 8"><path d="m1 6 4-4 4 4" /></svg><svg width="10" height="8" viewBox="0 0 10 8"><path d="m1 2 4 4 4-4" /></svg></div>
            <div class="hs"><svg width="8" height="10" viewBox="0 0 8 10"><path d="M6 1 2 5l4 4" /></svg><svg width="8" height="10" viewBox="0 0 8 10"><path d="m2 1 4 4-4 4" /></svg></div>
          </div>
        </div>
      </section>
    </main>

    <section class="bottom">
      <div class="panel modes">
        {#each modes as m, i}<button class:active={i === 0} aria-label={m}>{@render icon(m, 34)}</button>{/each}
      </div>
      <div class="panel feature">
        <div class="featbar">{#each features as f, i}<button class:active={i === 5} aria-label={f}>{@render icon(f)}</button>{/each}</div>
        <div class="featbody">
          <div class="counterbox">
            <div class="counter"><div class="small"><span>0</span><span>0</span></div><div class="digits">00</div></div>
            <div class="reflect"></div>
          </div>
          <form class="form" onsubmit={(e) => e.preventDefault()}>
            <div class="namerow">
              <label for="nm">名称</label><input id="nm" bind:value={name} />
              <div class="ftabs">{#each formTabs as t, i}<button type="button" class:on={i === 4} aria-label={t}>{@render icon(t, 18)}</button>{/each}</div>
            </div>
            <div class="coords">
              <div class="grid">
                {#each axisFields as [a, b]}
                  <label for={'f' + a}>{a}</label><input id={'f' + a} /><label for={'f' + b}>{b}</label><input id={'f' + b} />
                {/each}
                <div class="datum"><input type="checkbox" id="dt" bind:checked={datum} /><label for="dt">基准元素</label>{@render icon('probeGrey')}</div>
              </div>
              <div class="dcol">
                <label for="fD">D</label><input id="fD" />
                <span class="select"><select aria-label="方向"><option>外部</option></select></span>
              </div>
              <div class="actions"><button type="button">预览</button><button type="button">添加理论</button><button type="button">添加实际</button></div>
            </div>
          </form>
        </div>
      </div>
      <div class="panel settings">
        <form class="sform" onsubmit={(e) => e.preventDefault()}>
          <label for="s1">接近距离</label><input id="s1" value="2.0000" />
          <label for="s2">回退距离</label><input id="s2" value="2.0000" />
          <label for="s3">深度</label><input id="s3" value="0" />
          <span class="select"><select aria-label="间距"><option>间距面</option></select></span><input aria-label="间距面" value="20.0000" />
          <label for="s5">搜索距离</label><input id="s5" value="10.0000" />
          <button class="apply">应用</button>
        </form>
        <div class="badge" aria-hidden="true"></div>
        <nav class="vtabs">{#each sideTabs as t, i}<button class:on={i === 2} aria-label={t}>{@render icon(t, 18)}</button>{/each}
          <svg width="20" height="8" viewBox="0 0 20 8"><path d="M1 1h7L4.500 6zM12 6h7l-3.500-5z" fill="#667" /></svg></nav>
      </div>
    </section>

    <footer class="status">
      <span class="msg">加载CAD模型成功</span>
      <span class="select u1"><select aria-label="长度单位"><option>毫米</option></select></span>
      <span class="select u1"><select aria-label="角度单位"><option>角度</option></select></span>
      <span class="select u2"><select aria-label="坐标类型"><option>Cart</option></select></span>
      <span class="lights">{#each ['apple', 'hooks', 'calc'] as k}<button aria-label={k}>{@render icon(k, 16)}</button>{/each}</span>
    </footer>
  </div>
  <div class="taskline"></div>

  <p class="note" lang="zh-CN"><span class="first">在<b>CAD</b>模型上拾取想平移到的目标点或目标元素。测点选取工具条设置为“<b>CAD</b></span><br />线型（面型，点型）图形定义”，使用鼠标在<b>CAD</b>模型上处拾取圆元素“<b>CIR1</b>”。</p>
  <div class="wm">CSDN @山涧果子</div>
</div>

<style>
  :global(body) { margin: 0; background: #000; }
  .app, .app * { box-sizing: border-box; }
  .app {
    position: relative; min-height: 100vh; display: flex; flex-direction: column; overflow: hidden;
    background: #42406a; font: 12px/16px "DejaVu Sans Condensed", "Noto Sans CJK SC", sans-serif; color: #111;
  }
  .defs { position: absolute; }
  button { font: inherit; color: inherit; border: 0; background: none; padding: 0; margin: 0; display: flex; align-items: center; justify-content: center; }
  input, select { font: inherit; color: #222; }
  .icon { display: block; flex: none; overflow: visible; }

  .title { height: 39px; flex: none; display: flex; align-items: flex-start; padding: 0 6px 0 7px; background: linear-gradient(#423f60 0, #5a5777 5px, #4c4968 18px, #302e4b 22px, #35334f 29px, #4a4869 39px); }
  .logo { width: 70px; height: 33px; margin-top: 1px; padding-top: 6px; display: flex; gap: 8px; padding-left: 8px; border: 1px solid #2b2944; border-top: 0; border-radius: 0 0 4px 4px; background: #ffffff10; }
  h1 { margin: 4px 0 0 7px; flex: 1; font: bold 13px/18px "Noto Sans", sans-serif; color: #e4e4ee; white-space: nowrap; }
  .tray { display: flex; gap: 13px; margin: 14px 27px 0 0; }
  .tray span { display: flex; align-items: center; filter: drop-shadow(0 0 1px #fff) drop-shadow(0 0 1px #fff); }
  .winbtns { display: flex; gap: 3px; margin-top: 5px; }
  .winbtns button { width: 32px; height: 20px; border: 1px solid #29273f; border-radius: 3px; background: #4a4868; }

  .frame {
    flex: 1; margin: 0 7px; display: flex; flex-direction: column; border: 3px solid #a5e0f4; border-radius: 12px; overflow: hidden;
    background: linear-gradient(#bdeefb 0, #f2f8f9 12px, #e4e4e4 27px, #d4d6d8 28px);
  }
  .work { flex: 1; display: grid; grid-template-columns: 977fr 331fr 581fr; gap: 5px; }
  .col { display: flex; flex-direction: column; min-width: 0; }
  .tabs { height: 27px; display: flex; align-items: stretch; padding-left: 15px; }
  .tabs button.on { width: 50px; padding-bottom: 2px; background: linear-gradient(#c9f0fa, #f4f8f8); border-left: 1px solid #fff; border-right: 1px solid #c4c8ca; }
  .tabs span { display: flex; margin-left: 26px; padding-top: 2px; }
  .tabs span button { width: 24px; }
  .tabs.wide { padding-left: 9px; }
  .tabs.wide button, .tabs.wide button.on { width: 85px; padding-bottom: 3px; border-right: 1px solid #c8cccd; }

  .toolbar { height: 32px; flex: none; display: flex; align-items: center; padding: 0 0 2px 2px; border: 1px solid #aaa; border-radius: 5px 4px 4px 5px; background: #eeeeed; margin-bottom: 2px; }
  .tool { width: 26px; height: 26px; margin: 0 3px; }
  .tool.caret { width: 46px; margin: 0; justify-content: flex-start; padding-left: 7px; }
  .tool i { margin-left: 9px; border: 4px solid transparent; border-top-color: #222; border-bottom: 0; border-left-width: 3px; border-right-width: 3px; }
  .active { background: linear-gradient(#fbe3a4, #fef3c0); box-shadow: inset 0 0 0 1px #dfa345; border-radius: 3px; }
  .angle { width: 72px; height: 21px; border: 1px solid #b4bcc4; border-radius: 4px; background: #fff; padding: 0 5px; font-size: 11px; }

  .viewport { flex: 1; position: relative; background: #6b94d0; box-shadow: inset 0 1px #7c92b4; min-height: 727px; }
  .scene { position: absolute; inset: 0; width: 100%; height: 100%; }
  .palette { position: absolute; left: 3px; top: 3px; width: 36px; padding-bottom: 3px; background: #fff; border: 1px solid #4f7cae; display: flex; flex-direction: column; align-items: center; }
  .pinrow { height: 20px; align-self: stretch; display: flex; justify-content: flex-end; align-items: center; padding-right: 3px; border-bottom: 1px solid #ccc; margin: 0 1px; }
  .palette button { width: 25px; height: 25px; margin: 3px 0; }
  .tip { position: absolute; left: 22px; top: 114px; padding: 0 3px 0 1px; border: 5px solid #e3202a; background: #fff; color: #666; line-height: 16px; white-space: nowrap; box-shadow: 2px 2px 2px #0005; }

  .tree { position: relative; flex: 1; border: 1px solid #a8a8a8; border-radius: 4px 4px 0 0; display: flex; flex-direction: column; justify-content: space-between; overflow: hidden;
    background: linear-gradient(#eaeef0, #eaeef0) 27px 0 / 1px 100% no-repeat, linear-gradient(#eaeef0, #eaeef0) 181px 0 / 1px 100% no-repeat, #fff; }
  .marks { position: absolute; inset: 0; width: 100%; height: 100%; }
  .marks text { font: italic bold 20px "Liberation Sans", sans-serif; fill: #f4f4f4; }
  table { position: relative; width: 100%; table-layout: fixed; border-collapse: collapse; }
  .cid { width: 27px; } .cth { width: 154px; }
  th { height: 19px; padding: 0; font-weight: 400; background: #eeefef; border-right: 1px solid #dcdcdc; border-bottom: 1px solid #f0d890; }
  tbody::before { content: ""; display: block; height: 2px; }
  td { height: 18px; padding: 0 3px; line-height: 18px; white-space: nowrap; }
  td:nth-child(2) { padding: 0; }
  .id { text-align: right; }
  .sel td { background: #fde09a; color: #9c8c62; }
  .node { display: flex; align-items: center; height: 18px; }
  .nm { margin-left: 5px; }
  .twig { width: 9px; height: 1px; margin-left: 10px; border-top: 1px dotted #999; display: flex; align-items: center; }
  .exp { width: 9px; height: 9px; flex: none; margin-left: -4px; border: 1px solid #778; background: linear-gradient(#222, #222) 1px 3px / 5px 1px no-repeat #fff; }
  .branch { width: 9px; height: 18px; margin-left: 26px; margin-right: -1px; border-left: 1px dotted #999; background: linear-gradient(90deg, #aaa 1px, transparent 1px) 0 9px / 2px 1px repeat-x; }
  .branch.last { height: 9px; align-self: flex-start; background-position: 0 8px; }
  .hscroll { position: relative; display: flex; height: 18px; background: #e9eeef; align-items: stretch; }
  .hscroll button { width: 19px; background: #d9f3f5; border: 1px solid #b7d4d8; }
  .hscroll .thumb { flex: 1; margin: 1px 16px 1px 7px; background: #dcebef; border: 1px solid #b5c6cc; }
  .lt, .rt { border: 5px solid transparent; }
  .lt { border-right-color: #123; border-left: 0; } .rt { border-left-color: #123; border-right: 0; }
  .redbox { position: absolute; left: 10px; top: 178px; width: 137px; height: 48px; border: 5px solid #e3202a; }

  .program { flex: 1; display: flex; flex-direction: column; border: 1px solid #aaa; border-radius: 5px 5px 0 0; background: #eee; }
  .progbar { height: 27px; display: flex; border-bottom: 1px solid #ccc; }
  .progbar button { width: 30px; }
  .progbody { flex: 1; display: grid; grid-template: 1fr 18px / 31px 17px 1fr 20px; }
  .side { grid-row: 1 / 3; display: flex; flex-direction: column; align-items: center; }
  .side button { width: 25px; height: 23px; margin: 0 0 5px; }
  .side hr { width: 28px; height: 1px; margin: 3px 0 4px; border: 0; background: #999; }
  .gutter { background: #e3e3e3; border-right: 1px solid #999; }
  .code { background: #ccd6f0; }
  .vs, .hs { display: flex; justify-content: space-between; align-items: center; background: #f0f0f0; padding: 6px 0; flex-direction: column; }
  .hs { grid-column: 2 / 5; flex-direction: row; padding: 0 22px 0 5px; }
  .vs path, .hs path { fill: none; stroke: #aaa; stroke-width: 2; }

  .bottom { flex: none; display: grid; grid-template-columns: 99px 1fr 271px; gap: 3px; height: 168px; padding: 4px 0 0 1px; }
  .panel { border: 1px solid #a9b0b8; border-radius: 5px; background: #fff; overflow: hidden; }
  .modes { display: grid; grid-template-columns: 40px 40px; grid-auto-rows: 40px; gap: 6px 7px; padding: 16px 5px 0; background: linear-gradient(#cfe4fb, #fff 16px); }
  .modes button { border: 1px solid #ccc; border-radius: 4px; background: #ececec; }
  .modes button.active { background: linear-gradient(#fad98c, #fff6cc); border-color: #dfa345; }
  .feature { display: flex; flex-direction: column; }
  .featbar { height: 31px; display: flex; align-items: center; border-bottom: 1px solid #ddd; background: linear-gradient(#c9e0fb, #fff); }
  .featbar button { width: 26px; height: 26px; margin: 0 3px; }
  .featbody { flex: 1; display: flex; }
  .counterbox { width: 170px; padding: 10px 11px 0 9px; border-right: 1px solid #ddd; }
  .counter { height: 102px; display: flex; padding-left: 8px; border-radius: 5px; background: radial-gradient(circle at 60% 70%, #3c3c3c, transparent 70%), linear-gradient(#1b1b1b, #2b2b2b 38%, #3a3a3a 39%, #222 40%, #202020); font-family: "Open Sans", "Noto Sans", sans-serif; font-weight: 700; overflow: hidden; }
  .small { width: 23px; display: flex; flex-direction: column; color: #3e5770; font-size: 38px; line-height: 35px; padding-top: 4px; }
  .digits { color: #40dfa5; font-size: 92px; line-height: 100px; margin-left: 3px; }
  .reflect { height: 13px; margin: 1px 1px 0; background: linear-gradient(#ccc, #fff); }
  .form { flex: 1; min-width: 0; }
  .namerow { display: flex; align-items: center; height: 27px; border-bottom: 1px solid #ddd; padding-left: 15px; }
  .namerow input { width: 96px; margin: 0 0 0 17px; }
  .ftabs { display: flex; align-self: flex-end; margin-left: 240px; }
  .ftabs button { width: 31px; height: 21px; border: 1px solid #ddd; border-bottom: 0; border-radius: 4px 4px 0 0; background: #f4f4f4; }
  .ftabs button.on { border: 1px solid #45a4cc; border-bottom: 0; background: #dff3fb; }
  input, select { height: 20px; border: 1px solid #8ba6b2; border-radius: 4px; background: #fdfdff; padding: 0 5px; min-width: 0; outline: 0; font-size: 11px; }
  .coords { display: flex; align-items: flex-start; padding: 11px 0 0 12px; }
  .grid { display: grid; grid-template-columns: 11px 80px 21px 80px; row-gap: 1px; }
  .grid > label { font-size: 11px; line-height: 16px; padding-top: 4px; }
  .grid > label:nth-of-type(even) { padding-left: 11px; }
  .datum { grid-column: 1 / 5; display: flex; align-items: center; margin-top: 3px; height: 24px; }
  .datum label { margin: 0 70px 0 7px; }
  [type="checkbox"] { appearance: none; width: 14px; height: 14px; margin: 0 0 0 3px; padding: 0; border: 1px solid #93b8dc; border-radius: 3px; background: #d6e6fa; }
  .dcol { display: grid; grid-template-columns: 13px 80px; gap: 1px 0; margin-left: 10px; }
  .dcol .select { grid-column: 2; }
  .dcol label { font-size: 11px; }
  .select { position: relative; display: block; }
  .select::after { content: ""; position: absolute; right: 5px; top: 7px; border: 5px solid transparent; border-top-color: #123c44; border-bottom: 0; pointer-events: none; }
  .select select { appearance: none; width: 100%; padding: 0 4px; font-size: 12px; display: block; }
  .actions { margin: 20px 0 0 185px; display: flex; flex-direction: column; gap: 4px; }
  .actions button { width: 68px; height: 20px; border: 1px solid #7fa8b4; border-radius: 3px; background: linear-gradient(#fff, #dfe7ea); color: #888; }

  .settings { position: relative; display: flex; justify-content: space-between; background: linear-gradient(#d5e8f9, #fff 14px); }
  .sform { display: grid; grid-template-columns: 116px 84px; grid-auto-rows: 21px; align-items: center; row-gap: 4px; padding: 11px 0 0 33px; align-content: start; line-height: 20px; }
  .sform .select { width: 101px; }
  .apply { grid-column: 2; justify-self: end; width: 51px; height: 20px; border: 2px solid #8fd0e8; border-radius: 3px; background: linear-gradient(#fff, #dde8ec); box-shadow: 0 0 0 1px #5b9ab4 inset; }
  .badge { position: absolute; left: 203px; top: 94px; width: 29px; height: 30px; border-radius: 4px; background: #f5a8a840; }
  .vtabs { width: 24px; padding: 1px 2px 0 0; }
  .vtabs button { width: 22px; height: 30px; border: 1px solid #ddd; border-left: 0; border-radius: 0 4px 4px 0; background: #f4f4f4; }
  .vtabs button.on { background: #fff; border-color: #67b3d8; }

  .status { flex: none; height: 32px; display: flex; align-items: center; padding: 8px 4px 0 3px; background: linear-gradient(#f4fafe, #cfe3fa 50%, #9db2f4); }
  .msg { flex: 1; }
  .u1 { width: 84px; margin-right: 14px; }
  .u2 { width: 64px; margin-right: 18px; }
  .status select { border-color: #e4ecf8; }
  .lights { display: flex; gap: 8px; }
  .lights button { width: 20px; height: 20px; background: #fbdf9c; border: 1px solid #e2a848; border-radius: 2px; }
  .taskline { flex: none; height: 8px; background: linear-gradient(#24223c 0 3px, #7d83a8 3px 6px, #05040c 6px); }

  .note { position: absolute; left: 507px; top: 703px; width: 1224px; height: 103px; margin: 0; padding: 4px 0 0 9px; border: 5px solid #b0e62c; border-radius: 18px; color: #dc1f2c; font: 33px/43px "Noto Sans CJK SC", sans-serif; text-spacing-trim: space-all; white-space: nowrap; pointer-events: none; }
  .first { padding-left: 54px; }
  .note b { font: 28px/28px "Liberation Mono", monospace; }
  .wm { position: absolute; right: 6px; bottom: 12px; font: 37px/46px "Noto Sans CJK SC", sans-serif; color: #ffffffc0; text-shadow: 1px 1px 2px #555a; white-space: nowrap; pointer-events: none; }
</style>
